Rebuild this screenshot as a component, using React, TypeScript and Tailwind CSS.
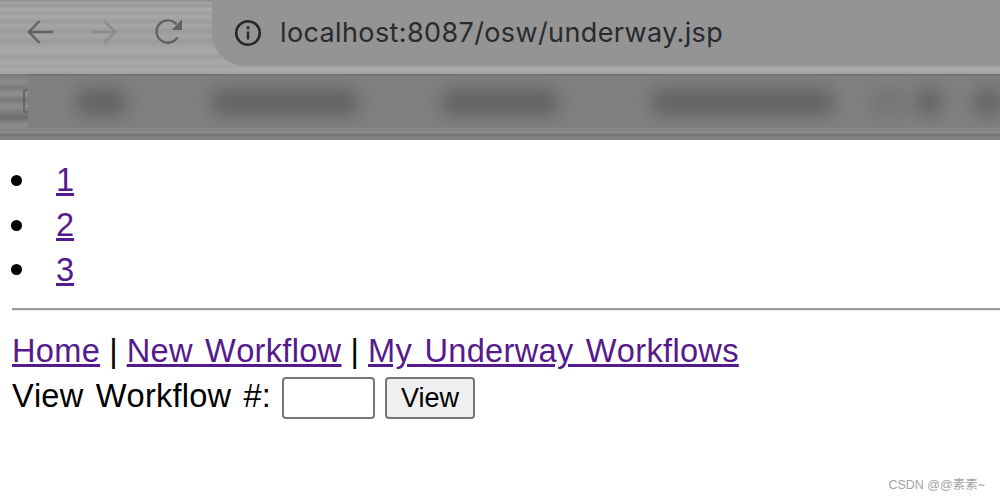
const link = "text-[#551a8b] underline tracking-[0.3px] [word-spacing:3px] [font-kerning:none]"

function Blob({ className }: { className: string }) {
  return <div className={`h-[26px] shrink-0 rounded-full bg-[#616161] blur-[9px] ${className}`}></div>
}

export default function App() {
  return (
    <div className="relative h-[502px] w-[1000px] overflow-hidden bg-white font-['Liberation_Sans',Arial,sans-serif] text-black">
      {/* browser chrome, greyed out */}
      <div className="flex h-[74px] bg-[linear-gradient(180deg,#8e8e8e_0px,#a4a4a4_3px,#999999_6px,#ababab_9px,#9e9e9e_13px,#a9a9a9_17px,#9c9c9c_21px,#a6a6a6_26px,#9a9a9a_31px,#a5a5a5_36px,#9b9b9b_41px,#a3a3a3_46px,#aaaaaa_52px,#9c9c9c_57px,#a8a8a8_62px,#a2a2a2_66px,#acacac_70px,#a0a0a0_74px)]">
        <div className="flex w-[212px] shrink-0 items-center gap-[38px] pb-[10px] pl-[27px]">
          <svg width="26" height="26" viewBox="0 0 26 26" fill="none" stroke="#5f6368" strokeWidth="2.4">
            <path d="M26 13H1.8M12.6 2 1.8 13l10.8 11" />
          </svg>
          <svg width="26" height="26" viewBox="0 0 26 26" fill="none" stroke="#8b8b8b" strokeWidth="2.4">
            <path d="M0 13h24.2M13.4 2l10.8 11-10.8 11" />
          </svg>
          <svg width="28" height="28" viewBox="0 0 28 28" fill="none">
            <path d="M22.4 19.3A11.2 11.2 0 1 1 21.6 6.6" stroke="#5f6368" strokeWidth="2.4" />
            <path d="M27 1.5V12H16.5Z" fill="#5f6368" />
          </svg>
        </div>
        <div className="flex h-[66px] flex-1 items-center rounded-bl-[33px] bg-[#949494] pl-[22px]">
          <svg width="28" height="28" viewBox="0 0 28 28" fill="none" stroke="#262626" strokeWidth="2.5">
            <circle cx="14" cy="14" r="11.8" />
            <path d="M14 12.5v8" />
            <path d="M14 7.2v3" />
          </svg>
          <span className="ml-[18px] font-['Inter',sans-serif] text-[27px] tracking-[0.38px] text-[#282a2e]">
            localhost:8087/osw/underway.jsp
          </span>
        </div>
      </div>
      <div className="flex h-[54px] overflow-hidden bg-[#808080]">
        <div className="w-[28px] shrink-0 bg-[linear-gradient(180deg,#777777_0px,#8c8c8c_8px,#7a7a7a_14px,#919191_20px,#777777_26px,#8e8e8e_32px,#7d7d7d_38px,#6e6e6e_44px,#8a8a8a_50px)] pl-[23px] pt-[15px]">
          <div className="h-[24px] w-[5px] rounded-l-[3px] border-2 border-r-0 border-[#666666]"></div>
        </div>
        <div className="flex flex-1 items-center border-t-2 border-[#757575] pl-[47px]">
          <Blob className="w-[53px]" />
          <Blob className="ml-[82px] w-[150px]" />
          <Blob className="ml-[80px] w-[120px]" />
          <Blob className="ml-[90px] w-[185px]" />
          <Blob className="ml-[35px] w-[35px] opacity-40" />
          <Blob className="ml-[10px] w-[28px]" />
          <Blob className="ml-[30px] w-[30px]" />
        </div>
      </div>
      <div className="h-[12px] border-t border-[#8d8d8d] bg-[linear-gradient(180deg,#7b7b7b_0px,#8f8f8f_3px,#757575_6px,#858585_9px,#7a7a7a_12px)]"></div>

      {/* page */}
      <div className="px-[12px] pt-[18px] text-[32.6px] leading-[44.8px]">
        <ul className="list-none">
          {["1", "2", "3"].map((n) => (
            <li key={n} className="flex items-center">
              <span className="ml-[-1px] h-[11px] w-[11px] rounded-full bg-black"></span>
              <a href="#" className="ml-[34px] text-[#551a8b] underline">
                {n}
              </a>
            </li>
          ))}
        </ul>
        <hr className="mt-[16px] mb-[18px] mr-[-12px] border-t-2 border-b border-t-[#9a9a9a] border-b-[#e8e8e8]" />
        <div>
          <a href="#" className={link}>Home</a> |{" "}
          <a href="#" className={link}>New Workflow</a> |{" "}
          <a href="#" className={link}>My Underway Workflows</a>
        </div>
        <div className="flex items-center">
          <span className="tracking-[0.2px] [word-spacing:3px] [font-kerning:none]">View Workflow #:</span>
          <input className="ml-[11px] mt-[3px] h-[42px] w-[93px] rounded-[4px] border-2 border-[#767676] bg-white" />
          <button className="ml-[10px] mt-[3px] h-[42px] w-[90px] rounded-[4px] border-2 border-[#767676] bg-[#efefef] text-[27px] leading-none">
            View
          </button>
        </div>
      </div>

      <div className="absolute right-[15px] bottom-[8px] font-['Liberation_Sans','Noto_Sans_CJK_SC',sans-serif] text-[12.5px] leading-[18px] text-[#a3a3a3]">
        CSDN @@素素~
      </div>
    </div>
  )
}
